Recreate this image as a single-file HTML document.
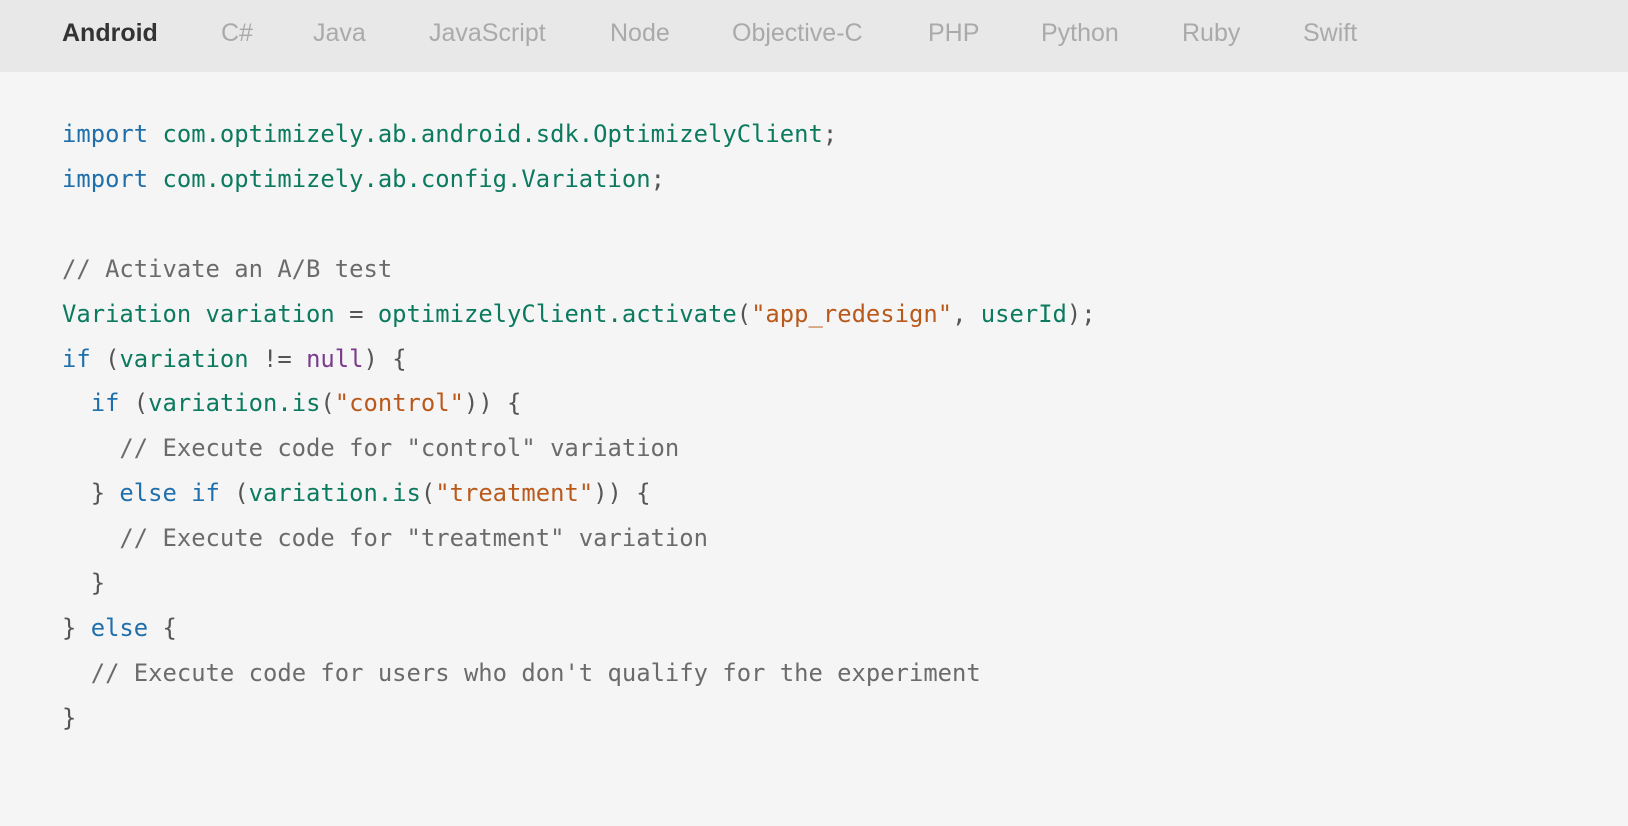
<!DOCTYPE html>
<html><head><meta charset="utf-8"><style>
html,body{margin:0;padding:0;width:1628px;height:826px;background:#f5f5f5;overflow:hidden}
.nav{height:72px;background:#e8e8e8;position:relative;font-family:"Liberation Sans",Arial,sans-serif;font-size:25px}
.nav span{position:absolute;top:19px;color:#aaa;line-height:28px}
.nav .a{color:#333;font-weight:bold}
pre{margin:0;position:absolute;left:62px;top:112px;font-family:"DejaVu Sans Mono",monospace;font-size:23.85px;line-height:44.9px;color:#555}
.k{color:#1f6fab}.g{color:#0b7a5e}.s{color:#b95a1c}.p{color:#7b3a8c}.c{color:#6b6b6b}
</style></head><body>
<div class="nav">
<span class="a" style="left:62px">Android</span>
<span style="left:221px">C#</span>
<span style="left:313px">Java</span>
<span style="left:429px">JavaScript</span>
<span style="left:610px">Node</span>
<span style="left:732px">Objective-C</span>
<span style="left:928px">PHP</span>
<span style="left:1041px">Python</span>
<span style="left:1182px">Ruby</span>
<span style="left:1303px">Swift</span>
</div>
<pre><span class="k">import</span> <span class="g">com.optimizely.ab.android.sdk.OptimizelyClient</span>;
<span class="k">import</span> <span class="g">com.optimizely.ab.config.Variation</span>;

<span class="c">// Activate an A/B test</span>
<span class="g">Variation variation</span> = <span class="g">optimizelyClient.activate</span>(<span class="s">"app_redesign"</span>, <span class="g">userId</span>);
<span class="k">if</span> (<span class="g">variation</span> != <span class="p">null</span>) {
  <span class="k">if</span> (<span class="g">variation.is</span>(<span class="s">"control"</span>)) {
    <span class="c">// Execute code for "control" variation</span>
  } <span class="k">else if</span> (<span class="g">variation.is</span>(<span class="s">"treatment"</span>)) {
    <span class="c">// Execute code for "treatment" variation</span>
  }
} <span class="k">else</span> {
  <span class="c">// Execute code for users who don't qualify for the experiment</span>
}</pre>
</body></html>
